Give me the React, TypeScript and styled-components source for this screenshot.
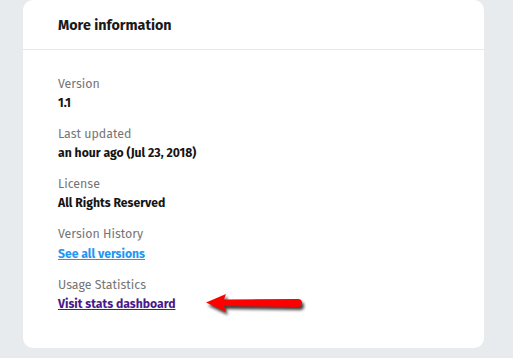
import React from 'react';
import styled, { createGlobalStyle } from 'styled-components';

const GlobalStyle = createGlobalStyle`
  body {
    margin: 0;
    background: #e8ebee;
    font-family: 'Fira Sans', 'Roboto', 'Noto Sans', sans-serif;
  }
`;

const infoRows = [
  { label: 'Version', value: '1.1' },
  { label: 'Last updated', value: 'an hour ago (Jul 23, 2018)' },
  { label: 'License', value: 'All Rights Reserved' },
];

const Page = styled.div`
  width: 513px;
  height: 358px;
  overflow: hidden;
`;

const Card = styled.section`
  margin-left: 23px;
  width: 461px;
  height: 348px;
  background: #fff;
  border-radius: 10px;
  box-sizing: border-box;
`;

const Header = styled.header`
  height: 50px;
  box-sizing: border-box;
  border-bottom: 1px solid #e8e8e8;
  display: flex;
  align-items: center;
  padding-left: 35px;
  padding-top: 1px;

  & h2 {
    margin: 0;
    font-size: 14.3px;
    font-weight: 700;
    color: #1a1a1a;
  }
`;

const Body = styled.div`
  padding: 24px 35px 0;
  display: flex;
  flex-direction: column;
  gap: 11px;
`;

const Item = styled.div`
  display: flex;
  flex-direction: column;
`;

const Label = styled.span`
  font-size: 12.4px;
  line-height: 19px;
  color: #757575;
`;

const Value = styled.span`
  font-size: 12.2px;
  line-height: 20px;
  font-weight: 700;
  color: #141414;
`;

const Link = styled.a<{ $visited?: boolean }>`
  font-size: 12.2px;
  line-height: 20px;
  font-weight: 700;
  color: ${({ $visited }) => ($visited ? '#4a1a8c' : '#2196f3')};
  text-decoration: underline;
`;

const LinkRow = styled.div`
  display: flex;
  align-items: center;
  gap: 30px;
  height: 20px;
`;

const ArrowSvg = styled.svg`
  display: block;
  overflow: visible;
  margin-top: -3px;
  filter: drop-shadow(2px 3px 1.5px rgba(0, 0, 0, 0.75));
`;

const Arrow = () => (
  <ArrowSvg width="98" height="20" viewBox="0 0 98 20">
    <path
      d="M1 9.5 L21 1 L19 6.5 L93 6 A4 4 0 0 1 93 14 L19 13 L21 19 Z"
      fill="#ff0000"
    />
  </ArrowSvg>
);

export default function App() {
  return (
    <>
      <GlobalStyle />
      <Page>
        <Card>
          <Header>
            <h2>More information</h2>
          </Header>
          <Body>
            {infoRows.map((row) => (
              <Item key={row.label}>
                <Label>{row.label}</Label>
                <Value>{row.value}</Value>
              </Item>
            ))}
            <Item>
              <Label>Version History</Label>
              <div>
                <Link href="#">See all versions</Link>
              </div>
            </Item>
            <Item>
              <Label>Usage Statistics</Label>
              <LinkRow>
                <Link href="#" $visited>
                  Visit stats dashboard
                </Link>
                <Arrow />
              </LinkRow>
            </Item>
          </Body>
        </Card>
      </Page>
    </>
  );
}
